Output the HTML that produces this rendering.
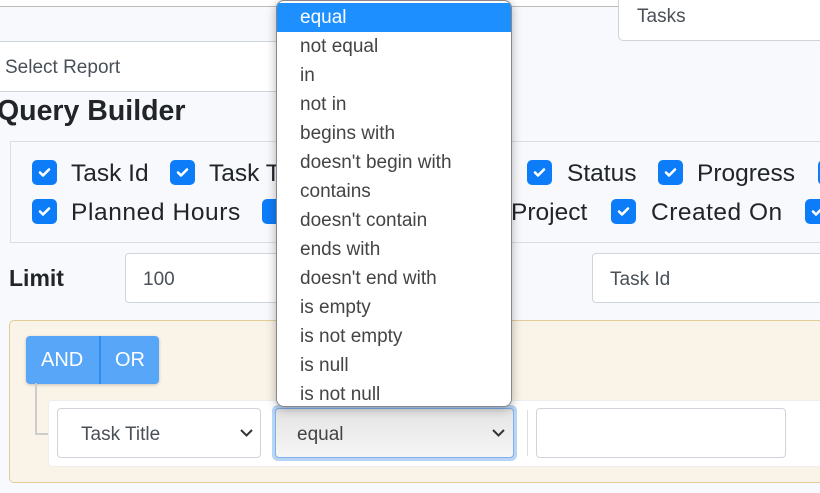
<!DOCTYPE html>
<html><head><style>
*{box-sizing:border-box;margin:0;padding:0}
body{width:820px;height:493px;overflow:hidden;background:#f8f9fc;font-family:"Liberation Sans","DejaVu Sans",sans-serif;color:#212529;position:relative}
.a{position:absolute}
.inp{position:absolute;background:#fff;border:1px solid #ced4da;border-radius:4px;color:#495057;font-size:19px;}
.cb{position:absolute;width:25px;height:25px;background:#0d7cf8;border-radius:5px}
.cb svg{position:absolute;left:6px;top:7px}
.lbl{position:absolute;font-size:24.5px;color:#212529}
.dd div{height:29px;line-height:29px;padding-left:23px;font-size:19px;color:#444}
.chev{position:absolute}
</style></head><body>
<div class="a" style="left:0;top:0;width:820px;height:7px;background:#fff;border-bottom:1px solid #bbb"></div>
<div class="inp" style="left:618px;top:-5px;width:210px;height:46px;padding:10px 0 0 18px;border-radius:0 0 0 5px">Tasks</div>
<div class="a" style="left:0;top:41px;width:300px;height:51px;background:#fff;border-top:1px solid #ced4da;border-bottom:1px solid #ced4da;font-size:19px;color:#495057;padding:15px 0 0 5px">Select Report</div>
<div class="a" style="left:-3px;top:95px;font-size:28.5px;font-weight:bold">Query Builder</div>
<div class="a" style="left:10px;top:141px;width:820px;height:102px;border:1px solid #dadde2;background:#f8f9fc"></div>
<svg width="0" height="0" style="position:absolute"><defs><symbol id="ck" viewBox="0 0 13 11"><path d="M2 5.5l3 3 6-6" stroke="#fff" stroke-width="2.6" fill="none" stroke-linecap="round" stroke-linejoin="round"/></symbol></defs></svg>
<div class="cb" style="left:32px;top:160px"><svg width="13" height="11"><use href="#ck"/></svg></div><div class="lbl" style="left:71px;top:160px">Task Id</div>
<div class="cb" style="left:170px;top:160px"><svg width="13" height="11"><use href="#ck"/></svg></div><div class="lbl" style="left:209px;top:160px">Task Title</div>
<div class="cb" style="left:527px;top:160px"><svg width="13" height="11"><use href="#ck"/></svg></div><div class="lbl" style="left:567px;top:160px">Status</div>
<div class="cb" style="left:658px;top:160px"><svg width="13" height="11"><use href="#ck"/></svg></div><div class="lbl" style="left:697px;top:160px">Progress</div>
<div class="cb" style="left:818px;top:160px"></div>
<div class="cb" style="left:32px;top:199px"><svg width="13" height="11"><use href="#ck"/></svg></div><div class="lbl" style="left:71px;top:199px;letter-spacing:0.6px">Planned Hours</div>
<div class="cb" style="left:262px;top:199px"></div>
<div class="lbl" style="left:511px;top:199px">Project</div>
<div class="cb" style="left:611px;top:199px"><svg width="13" height="11"><use href="#ck"/></svg></div><div class="lbl" style="left:651px;top:199px;letter-spacing:0.5px">Created On</div>
<div class="cb" style="left:805px;top:199px"><svg width="13" height="11"><use href="#ck"/></svg></div>
<div class="a" style="left:9px;top:265px;font-size:23px;font-weight:bold">Limit</div>
<div class="inp" style="left:125px;top:253px;width:160px;height:50px;padding:15px 0 0 17px">100</div>
<div class="inp" style="left:592px;top:253px;width:240px;height:50px;padding:15px 0 0 17px">Task Id</div>
<div class="a" style="left:9px;top:320px;width:820px;height:163px;background:#f9f3e8;border:1px solid #e2cc98;border-radius:5px"></div>
<div class="a" style="left:26px;top:336px;width:133px;height:48px;background:#58a6f7;border-radius:4px;box-shadow:0 1px 3px rgba(0,0,0,.2);color:#fff;font-size:20px">
<span class="a" style="left:15px;top:13px">AND</span><div class="a" style="left:73px;top:0;width:2px;height:48px;background:#2e8cf0"></div><span class="a" style="left:89px;top:13px">OR</span></div>
<div class="a" style="left:35px;top:383px;width:16px;height:52px;border-left:2px solid #ccc;border-bottom:2px solid #ccc"></div>
<div class="a" style="left:48px;top:400px;width:780px;height:67px;background:#fff;border-radius:4px;border:1px solid #eee"></div>
<div class="inp" style="left:57px;top:408px;width:204px;height:50px;padding:15px 0 0 23px">Task Title<svg class="chev" style="left:182px;top:20px" width="13" height="8"><path d="M1 1l5.5 5.5L12 1" stroke="#333" stroke-width="2" fill="none"/></svg></div>
<div class="a" style="left:272px;top:405px;width:245px;height:56px;border-radius:6px;background:#b8d5f6"></div>
<div class="a" style="left:275px;top:408px;width:239px;height:50px;border:1px solid #7fb0ec;border-radius:4px;background:linear-gradient(#e4e4e4,#f6f6f6);font-size:19px;color:#444;padding:15px 0 0 21px">equal<svg class="chev" style="left:216px;top:20px" width="13" height="8"><path d="M1 1l5.5 5.5L12 1" stroke="#333" stroke-width="2" fill="none"/></svg></div>
<div class="a" style="left:527px;top:410px;width:1px;height:46px;background:#ddd"></div>
<div class="inp" style="left:536px;top:408px;width:250px;height:50px"></div>
<div class="a dd" style="left:276px;top:0;width:236px;height:407px;background:#fff;border:1px solid #888;border-radius:8px;box-shadow:0 2px 10px rgba(0,0,0,.3);overflow:hidden;padding-top:2px">
<div style="background:#1e8fff;color:#fff">equal</div><div>not equal</div><div>in</div><div>not in</div><div>begins with</div><div>doesn't begin with</div><div>contains</div><div>doesn't contain</div><div>ends with</div><div>doesn't end with</div><div>is empty</div><div>is not empty</div><div>is null</div><div>is not null</div>
</div>
</body></html>
